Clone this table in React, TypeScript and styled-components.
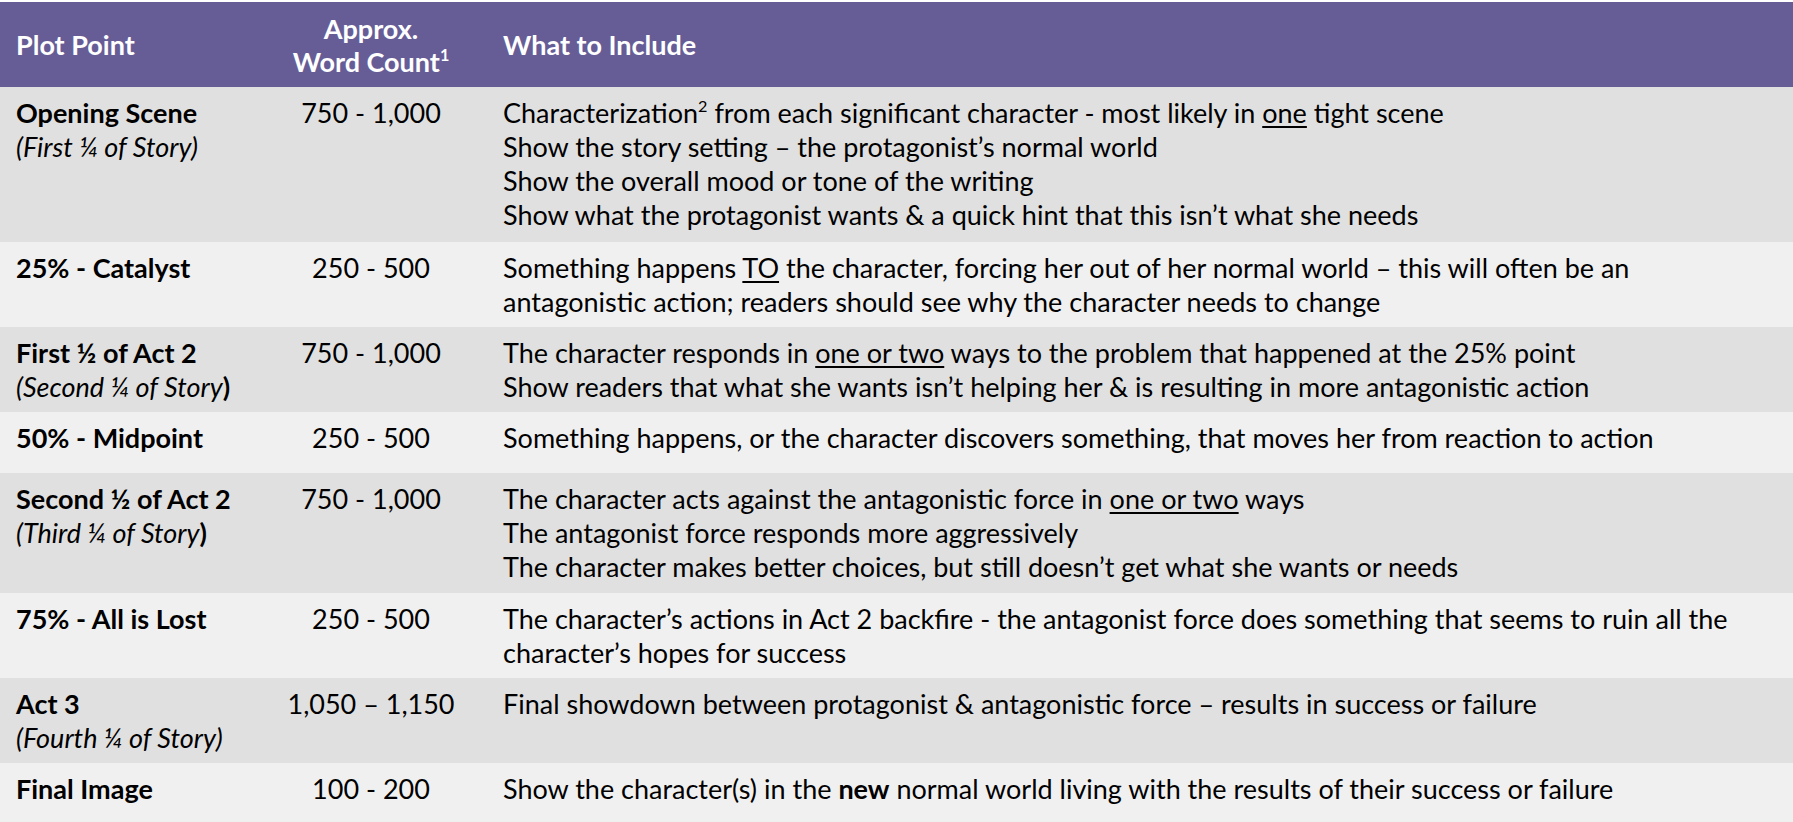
import React from "react";
import styled, { createGlobalStyle } from "styled-components";

const Global = createGlobalStyle`
  html, body { margin: 0; padding: 0; background: #ffffff; }
  body { font-family: Lato, "Open Sans", sans-serif; color: #000; }
`;

const Page = styled.div`
  padding-top: 2px;
  width: 1793px;
`;

const Table = styled.div`
  display: grid;
  grid-template-columns: 255px 232px 1fr;
  font-family: Lato, "Open Sans", sans-serif;
  font-size: 27px;
  line-height: 34px;
`;

const HeadCell = styled.div<{ $center?: boolean }>`
  background: #665d97;
  color: #ffffff;
  font-weight: 700;
  height: 85px;
  display: flex;
  flex-direction: column;
  justify-content: center;
  align-items: ${(p) => (p.$center ? "center" : "flex-start")};
  text-align: ${(p) => (p.$center ? "center" : "left")};
  padding: 0 16px;
  line-height: 33px;
  box-sizing: border-box;
`;

const HeadLine = styled.div``;

const Cell = styled.div<{ $shade: boolean; $h: number; $center?: boolean }>`
  background: ${(p) => (p.$shade ? "#e0e0e0" : "#f0f0f0")};
  height: ${(p) => p.$h}px;
  box-sizing: border-box;
  padding: 9px 16px 0;
  text-align: ${(p) => (p.$center ? "center" : "left")};
  white-space: nowrap;
`;

const Line = styled.div``;

const Title = styled.div`
  font-weight: 700;
`;

const Sub = styled.div`
  font-style: italic;
`;

const Paren = styled.span`
  font-style: normal;
  font-weight: 700;
`;

const U = styled.span`
  text-decoration: underline;
  text-underline-offset: 3px;
  text-decoration-thickness: 2px;
`;

const B = styled.span`
  font-weight: 700;
`;

const Sup = styled.sup`
  font-size: 0.6em;
  line-height: 0;
  vertical-align: 0.65em;
`;

type Row = {
  h: number;
  title: React.ReactNode;
  sub?: React.ReactNode;
  count: string;
  lines: React.ReactNode[];
};

const rows: Row[] = [
  {
    h: 155,
    title: "Opening Scene",
    sub: "(First ¼ of Story)",
    count: "750 - 1,000",
    lines: [
      <>
        Characterization<Sup>2</Sup> from each significant character - most likely in <U>one</U> tight scene
      </>,
      "Show the story setting – the protagonist’s normal world",
      "Show the overall mood or tone of the writing",
      "Show what the protagonist wants & a quick hint that this isn’t what she needs",
    ],
  },
  {
    h: 85,
    title: "25% - Catalyst",
    count: "250 - 500",
    lines: [
      <>
        Something happens <U>TO</U> the character, forcing her out of her normal world – this will often be an
      </>,
      "antagonistic action; readers should see why the character needs to change",
    ],
  },
  {
    h: 85,
    title: "First ½ of Act 2",
    sub: (
      <>
        (Second ¼ of Story<Paren>)</Paren>
      </>
    ),
    count: "750 - 1,000",
    lines: [
      <>
        The character responds in <U>one or two</U> ways to the problem that happened at the 25% point
      </>,
      "Show readers that what she wants isn’t helping her & is resulting in more antagonistic action",
    ],
  },
  {
    h: 61,
    title: "50% - Midpoint",
    count: "250 - 500",
    lines: ["Something happens, or the character discovers something, that moves her from reaction to action"],
  },
  {
    h: 120,
    title: "Second ½ of Act 2",
    sub: (
      <>
        (Third ¼ of Story<Paren>)</Paren>
      </>
    ),
    count: "750 - 1,000",
    lines: [
      <>
        The character acts against the antagonistic force in <U>one or two</U> ways
      </>,
      "The antagonist force responds more aggressively",
      "The character makes better choices, but still doesn’t get what she wants or needs",
    ],
  },
  {
    h: 85,
    title: "75% - All is Lost",
    count: "250 - 500",
    lines: [
      "The character’s actions in Act 2 backfire - the antagonist force does something that seems to ruin all the",
      "character’s hopes for success",
    ],
  },
  {
    h: 85,
    title: "Act 3",
    sub: "(Fourth ¼ of Story)",
    count: "1,050 – 1,150",
    lines: ["Final showdown between protagonist & antagonistic force – results in success or failure"],
  },
  {
    h: 59,
    title: "Final Image",
    count: "100 - 200",
    lines: [
      <>
        Show the character(s) in the <B>new</B> normal world living with the results of their success or failure
      </>,
    ],
  },
];

export default function App() {
  return (
    <Page>
      <Global />
      <Table>
        <HeadCell>Plot Point</HeadCell>
        <HeadCell $center>
          <HeadLine>Approx.</HeadLine>
          <HeadLine>
            Word Count<Sup>1</Sup>
          </HeadLine>
        </HeadCell>
        <HeadCell>What to Include</HeadCell>
        {rows.map((r, i) => {
          const shade = i % 2 === 0;
          return (
            <React.Fragment key={i}>
              <Cell $shade={shade} $h={r.h}>
                <Title>{r.title}</Title>
                {r.sub && <Sub>{r.sub}</Sub>}
              </Cell>
              <Cell $shade={shade} $h={r.h} $center>
                {r.count}
              </Cell>
              <Cell $shade={shade} $h={r.h}>
                {r.lines.map((l, j) => (
                  <Line key={j}>{l}</Line>
                ))}
              </Cell>
            </React.Fragment>
          );
        })}
      </Table>
    </Page>
  );
}
